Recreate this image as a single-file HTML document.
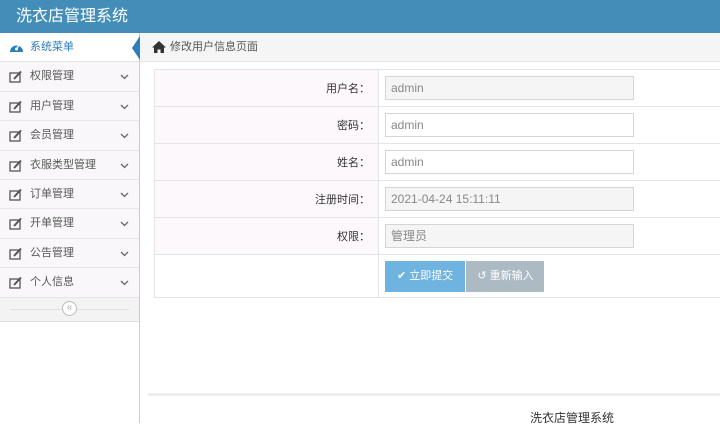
<!DOCTYPE html>
<html><head><meta charset="utf-8"><style>
*{box-sizing:border-box;margin:0;padding:0}
body{width:720px;height:423px;overflow:hidden;background:#fff;font-family:"Liberation Sans","Noto Sans CJK SC",sans-serif;font-size:12px;color:#393939;position:relative}
.hd{position:absolute;left:0;top:0;width:720px;height:33px;background:#438eb9;color:#fff;font-size:16px;line-height:33px;padding-left:16px}
.sb{position:absolute;left:0;top:33px;width:140px;height:390px;background:#fff;border-right:1px solid #ccc}
.mi{height:29.4px;border-bottom:1px solid #e5e5e5;background:#f9f7f9;line-height:29px;padding-left:30px;position:relative;font-size:11px;color:#585858}
.mi.first{background:#fff;color:#2b7dbc}
.mi svg{position:absolute;left:9px;top:8px}
.mi svg.ch{left:auto;right:10px;top:12px}
.col{height:24px;border-bottom:1px solid #e0e0e0;background:#f3f3f3;position:relative}
.col:before{content:"";position:absolute;left:10px;right:10px;top:11px;border-top:1px solid #e0e0e0}
.col span{position:absolute;left:62px;top:3px;width:15px;height:15px;border-radius:50%;background:#fff;border:1px solid #bbb;font-size:10px;line-height:12px;text-align:center;color:#aaa}
.arr{position:absolute;left:132px;top:36px;border:12px solid transparent;border-right:8px solid #2b7dbc;border-left:0}
.bc{position:absolute;left:140px;top:33px;width:580px;height:29px;background:#f5f5f5;border-bottom:1px solid #e5e5e5;line-height:29px;padding-left:30px;font-size:11px;color:#555}
table{position:absolute;left:154px;top:69px;width:580px;border-collapse:collapse}
td{border:1px solid #e4e4e4;height:37px}
td.l{width:224px;background:#fcf8fc;text-align:right;padding-right:8px;font-size:11px;color:#333}
td.r{padding-left:6px}
.in{width:249px;height:24px;border:1px solid #d5d5d5;padding-left:5px;line-height:22px;font-size:12px;color:#888;background:#fff}
.in.d{background:#f5f5f5}
.bt{display:inline-block;height:31px;line-height:31px;color:#fff;font-size:11px;vertical-align:top}
.ft{position:absolute;left:148px;top:393px;width:572px;border-top:3px solid #eee;font-size:12px;padding-top:13px;padding-left:382px;color:#333}
</style></head><body>
<div class="hd">洗衣店管理系统</div>
<div class="sb">
<div class="mi first"><svg width="15" height="12" viewBox="0 0 15 12"><path d="M1 11A6.5 6.5 0 1 1 14 11Z" fill="#2b7dbc"/><circle cx="7.5" cy="8" r="1.5" fill="#fff"/><path d="M7.5 8L10 4" stroke="#fff" stroke-width="1.3"/></svg>系统菜单</div>
<div class="mi"><svg width="14" height="13"><rect x="1" y="3" width="10" height="9" fill="none" stroke="#555" stroke-width="1.3"/><path d="M5 9L12 1.5" stroke="#555" stroke-width="2"/></svg>权限管理<svg class="ch" width="9" height="6"><path d="M1 1L4.5 4.5L8 1" fill="none" stroke="#666" stroke-width="1.3"/></svg></div>
<div class="mi"><svg width="14" height="13"><rect x="1" y="3" width="10" height="9" fill="none" stroke="#555" stroke-width="1.3"/><path d="M5 9L12 1.5" stroke="#555" stroke-width="2"/></svg>用户管理<svg class="ch" width="9" height="6"><path d="M1 1L4.5 4.5L8 1" fill="none" stroke="#666" stroke-width="1.3"/></svg></div>
<div class="mi"><svg width="14" height="13"><rect x="1" y="3" width="10" height="9" fill="none" stroke="#555" stroke-width="1.3"/><path d="M5 9L12 1.5" stroke="#555" stroke-width="2"/></svg>会员管理<svg class="ch" width="9" height="6"><path d="M1 1L4.5 4.5L8 1" fill="none" stroke="#666" stroke-width="1.3"/></svg></div>
<div class="mi"><svg width="14" height="13"><rect x="1" y="3" width="10" height="9" fill="none" stroke="#555" stroke-width="1.3"/><path d="M5 9L12 1.5" stroke="#555" stroke-width="2"/></svg>衣服类型管理<svg class="ch" width="9" height="6"><path d="M1 1L4.5 4.5L8 1" fill="none" stroke="#666" stroke-width="1.3"/></svg></div>
<div class="mi"><svg width="14" height="13"><rect x="1" y="3" width="10" height="9" fill="none" stroke="#555" stroke-width="1.3"/><path d="M5 9L12 1.5" stroke="#555" stroke-width="2"/></svg>订单管理<svg class="ch" width="9" height="6"><path d="M1 1L4.5 4.5L8 1" fill="none" stroke="#666" stroke-width="1.3"/></svg></div>
<div class="mi"><svg width="14" height="13"><rect x="1" y="3" width="10" height="9" fill="none" stroke="#555" stroke-width="1.3"/><path d="M5 9L12 1.5" stroke="#555" stroke-width="2"/></svg>开单管理<svg class="ch" width="9" height="6"><path d="M1 1L4.5 4.5L8 1" fill="none" stroke="#666" stroke-width="1.3"/></svg></div>
<div class="mi"><svg width="14" height="13"><rect x="1" y="3" width="10" height="9" fill="none" stroke="#555" stroke-width="1.3"/><path d="M5 9L12 1.5" stroke="#555" stroke-width="2"/></svg>公告管理<svg class="ch" width="9" height="6"><path d="M1 1L4.5 4.5L8 1" fill="none" stroke="#666" stroke-width="1.3"/></svg></div>
<div class="mi"><svg width="14" height="13"><rect x="1" y="3" width="10" height="9" fill="none" stroke="#555" stroke-width="1.3"/><path d="M5 9L12 1.5" stroke="#555" stroke-width="2"/></svg>个人信息<svg class="ch" width="9" height="6"><path d="M1 1L4.5 4.5L8 1" fill="none" stroke="#666" stroke-width="1.3"/></svg></div>
<div class="col"><span>«</span></div>
</div>
<div class="arr"></div>
<div class="bc"><svg style="position:absolute;left:12px;top:8px" width="14" height="12" viewBox="0 0 14 12"><path d="M7 0L0 6.5H2V12H5.5V8.5H8.5V12H12V6.5H14Z" fill="#333"/></svg>修改用户信息页面</div>
<table>
<tr><td class="l">用户名：</td><td class="r"><div class="in d">admin</div></td></tr>
<tr><td class="l">密码：</td><td class="r"><div class="in">admin</div></td></tr>
<tr><td class="l">姓名：</td><td class="r"><div class="in">admin</div></td></tr>
<tr><td class="l">注册时间：</td><td class="r"><div class="in d">2021-04-24 15:11:11</div></td></tr>
<tr><td class="l">权限：</td><td class="r"><div class="in d">管理员</div></td></tr>
<tr><td class="l" style="height:43px;background:#fff"></td><td class="r"><span class="bt" style="width:80px;background:#6fb3e0;padding-left:12px">✔ 立即提交</span> <span class="bt" style="width:78px;background:#abbac3;padding-left:11px;margin-left:-2px">↺ 重新输入</span></td></tr>
</table>
<div class="ft">洗衣店管理系统</div>
</body></html>
